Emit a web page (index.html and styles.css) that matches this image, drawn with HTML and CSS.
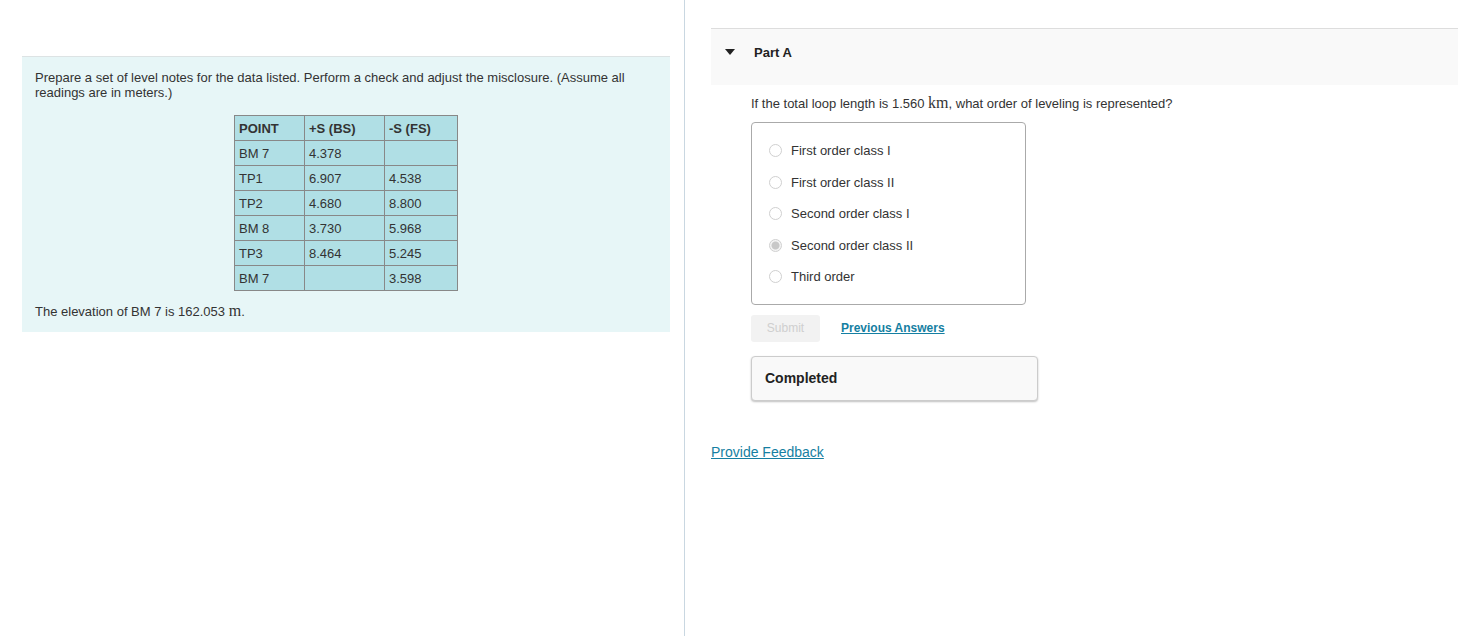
FILE: index.html
```html
<!DOCTYPE html>
<html>
<head>
<meta charset="utf-8">
<link rel="stylesheet" href="styles.css">
</head>
<body>
<div class="page">
  <div class="left">
    <div class="intro">
      <p class="lead">Prepare a set of level notes for the data listed. Perform a check and adjust the misclosure. (Assume all readings are in meters.)</p>
      <table class="data">
        <tr><th class="c1">POINT</th><th class="c2">+S (BS)</th><th class="c3">-S (FS)</th></tr>
        <tr><td>BM 7</td><td>4.378</td><td></td></tr>
        <tr><td>TP1</td><td>6.907</td><td>4.538</td></tr>
        <tr><td>TP2</td><td>4.680</td><td>8.800</td></tr>
        <tr><td>BM 8</td><td>3.730</td><td>5.968</td></tr>
        <tr><td>TP3</td><td>8.464</td><td>5.245</td></tr>
        <tr><td>BM 7</td><td></td><td>3.598</td></tr>
      </table>
      <p class="elev">The elevation of BM 7 is 162.053 <span class="math">m</span>.</p>
    </div>
  </div>
  <div class="right">
    <div class="part-head">
      <span class="caret"></span>
      <span class="part-title">Part A</span>
    </div>
    <div class="part-body">
      <p class="question">If the total loop length is 1.560 <span class="math">km</span>, what order of leveling is represented?</p>
      <div class="options">
        <div class="opt"><span class="radio"></span><span>First order class I</span></div>
        <div class="opt"><span class="radio"></span><span>First order class II</span></div>
        <div class="opt"><span class="radio"></span><span>Second order class I</span></div>
        <div class="opt"><span class="radio checked"></span><span>Second order class II</span></div>
        <div class="opt"><span class="radio"></span><span>Third order</span></div>
      </div>
      <div class="actions">
        <span class="submit">Submit</span>
        <a class="prev" href="#">Previous Answers</a>
      </div>
      <div class="completed">Completed</div>
    </div>
    <a class="feedback" href="#">Provide Feedback</a>
  </div>
</div>
</body>
</html>
```
FILE: styles.css
```css
html, body {
  margin: 0;
  padding: 0;
  background: #fff;
}
body {
  font-family: "Liberation Sans", Arial, sans-serif;
  font-size: 13px;
  color: #333;
}
.page {
  display: flex;
  min-height: 636px;
}
.left {
  width: 684px;
  border-right: 1px solid #c9d7e1;
  padding-top: 56px;
}
.intro {
  margin-left: 22px;
  width: 648px;
  box-sizing: border-box;
  background: #e7f6f7;
  border-top: 1px solid #dde3e4;
  padding: 13px 13px 13px 13px;
}
.lead {
  margin: 0;
  line-height: 15px;
}
.data {
  border-collapse: collapse;
  margin: 15px auto 0;
  background: #b0dfe5;
}
.data th, .data td {
  border: 1px solid #888;
  height: 24px;
  padding: 0 4px;
  text-align: left;
  vertical-align: middle;
  line-height: 15px;
}
.data th { font-weight: bold; }
.c1 { width: 61px; }
.c2 { width: 71px; }
.c3 { width: 64px; }
.elev {
  margin: 13px 0 0;
  line-height: 15px;
}
.math {
  font-family: "Liberation Serif", "Times New Roman", serif;
  font-size: 16px;
  line-height: 10px;
}
.right {
  flex: 1;
  padding-left: 26px;
  padding-top: 28px;
}
.part-head {
  display: flex;
  align-items: center;
  background: #f9f9f9;
  border-top: 1px solid #dddddd;
  padding-left: 14px;
  padding-bottom: 10px;
  height: 46px;
}
.caret {
  width: 0;
  height: 0;
  border-left: 5px solid transparent;
  border-right: 5px solid transparent;
  border-top: 6px solid #222;
  margin-right: 19px;
}
.part-title {
  font-weight: bold;
  font-size: 13px;
  color: #222;
}
.part-body {
  padding-left: 40px;
}
.question {
  margin: 11px 0 11px;
  line-height: 15px;
}
.options {
  width: 273px;
  border: 1px solid #aaa;
  border-radius: 4px;
  padding: 12px 0 11px;
}
.opt {
  display: flex;
  align-items: center;
  height: 31.5px;
  padding-left: 17px;
}
.radio {
  width: 11px;
  height: 11px;
  border: 1px solid #d0d0d0;
  border-radius: 50%;
  background: #fff;
  margin-right: 9px;
  flex: none;
}
.radio.checked {
  background: radial-gradient(circle, #c8c8c8 0 3.5px, #f4f4f4 4.5px);
}
.actions {
  display: flex;
  align-items: center;
  margin-top: 10px;
}
.submit {
  width: 69px;
  height: 27px;
  line-height: 27px;
  text-align: center;
  background: #f2f2f2;
  color: #cfcfcf;
  border-radius: 3px;
  margin-right: 21px;
  font-size: 12px;
}
.prev {
  color: #157fa2;
  font-weight: bold;
  font-size: 12px;
  text-decoration: underline;
}
.completed {
  margin-top: 14px;
  width: 272px;
  height: 43px;
  line-height: 43px;
  background: #f9f9f9;
  border: 1px solid #cccccc;
  border-radius: 4px;
  box-shadow: 0 1px 2px rgba(0,0,0,0.25);
  padding-left: 13px;
  font-weight: bold;
  font-size: 14px;
  color: #222;
}
.feedback {
  display: inline-block;
  margin-top: 43px;
  font-size: 14px;
  color: #157fa2;
  text-decoration: underline;
}
```
